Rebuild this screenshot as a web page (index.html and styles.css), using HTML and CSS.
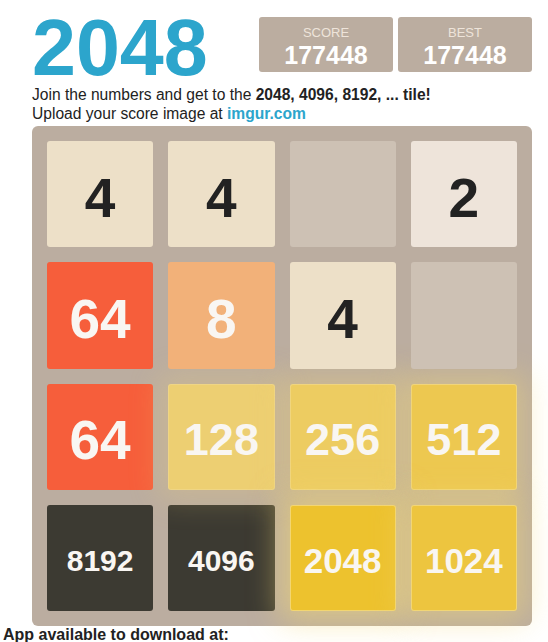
FILE: index.html
```html
<!DOCTYPE html>
<html lang="en">
<head>
    <meta charset="UTF-8">
    <meta name="viewport" content="width=device-width, initial-scale=1.0">
    <title>2048</title>
    <link rel="stylesheet" href="styles.css">
</head>
<body>
    <div class="container">
        <div class="heading">
            <h1 class="title">2048</h1>
            <div class="scores">
                <div class="score-box">
                    <span class="score-label">SCORE</span>
                    <span class="score-value">177448</span>
                </div>
                <div class="score-box">
                    <span class="score-label">BEST</span>
                    <span class="score-value">177448</span>
                </div>
            </div>
        </div>

        <p class="intro">
            Join the numbers and get to the <strong>2048, 4096, 8192, ... tile!</strong><br>
            Upload your score image at <a href="#" class="link">imgur.com</a>
        </p>

        <div class="board">
            <div class="tile tile-4">4</div>
            <div class="tile tile-4">4</div>
            <div class="tile"></div>
            <div class="tile tile-2">2</div>

            <div class="tile tile-64">64</div>
            <div class="tile tile-8">8</div>
            <div class="tile tile-4">4</div>
            <div class="tile"></div>

            <div class="tile tile-64 tile-under">64</div>
            <div class="tile tile-128">128</div>
            <div class="tile tile-256">256</div>
            <div class="tile tile-512">512</div>

            <div class="tile tile-super">8192</div>
            <div class="tile tile-super tile-under">4096</div>
            <div class="tile tile-2048">2048</div>
            <div class="tile tile-1024">1024</div>
        </div>
    </div>

    <p class="app-notice">App available to download at:</p>
</body>
</html>
```

FILE: styles.css
```css
body {
    font-family: "Liberation Sans", Arial, sans-serif;
    margin: 0;
    padding: 0;
    background: #fff;
    color: #222;
}

.container {
    width: 500px;
    margin-left: 32px;
    padding-top: 10px;
}

.heading {
    display: flex;
    justify-content: space-between;
    align-items: flex-start;
}

.title {
    margin: 0;
    font-size: 79px;
    line-height: 75px;
    font-weight: bold;
    color: #2ca5cc;
}

.scores {
    display: flex;
    gap: 5px;
    margin-top: 7px;
}

.score-box {
    width: 134px;
    height: 55px;
    box-sizing: border-box;
    padding-top: 8px;
    background: #bbada0;
    border-radius: 3px;
    display: flex;
    flex-direction: column;
    align-items: center;
}

.score-label {
    font-size: 13px;
    line-height: 15px;
    color: #eee4da;
}

.score-value {
    margin-top: 3px;
    font-size: 25px;
    line-height: 25px;
    font-weight: bold;
    color: #fff;
}

.intro {
    margin: 0 0 3px;
    font-size: 15.6px;
    line-height: 19px;
}

.link {
    color: #2ca5cc;
    font-weight: bold;
    text-decoration: none;
}

.board {
    width: 500px;
    height: 500px;
    box-sizing: border-box;
    padding: 15px;
    background: #bbada0;
    border-radius: 6px;
    display: grid;
    grid-template-columns: repeat(4, 1fr);
    grid-template-rows: repeat(4, 1fr);
    gap: 15px;
}

/* plain tiles sit above the glow of the big ones */
.tile {
    position: relative;
    z-index: 2;
    box-sizing: border-box;
    padding-top: 7px;
    border-radius: 3px;
    background: #cdc1b4;
    display: flex;
    justify-content: center;
    align-items: center;
    font-size: 55px;
    font-weight: bold;
    color: #f9f6f2;
}

.tile-under {
    z-index: 0;
}

.tile-2 { background: #eee4da; color: #222; }
.tile-4 { background: #ede0c8; color: #222; }
.tile-8 { background: #f2b179; }
.tile-64 { background: #f65e3b; }

.tile-128,
.tile-256,
.tile-512 {
    z-index: 1;
    font-size: 45px;
}

.tile-128 {
    background: #edcf72;
    box-shadow: 0 0 30px 10px rgba(243, 215, 116, 0.24), inset 0 0 0 1px rgba(255, 255, 255, 0.14);
}

.tile-256 {
    background: #edcc61;
    box-shadow: 0 0 30px 10px rgba(243, 215, 116, 0.32), inset 0 0 0 1px rgba(255, 255, 255, 0.19);
}

.tile-512 {
    background: #edc850;
    box-shadow: 0 0 30px 10px rgba(243, 215, 116, 0.4), inset 0 0 0 1px rgba(255, 255, 255, 0.24);
}

.tile-1024,
.tile-2048 {
    z-index: 1;
    font-size: 35px;
}

.tile-1024 {
    background: #edc53f;
    box-shadow: 0 0 30px 10px rgba(243, 215, 116, 0.48), inset 0 0 0 1px rgba(255, 255, 255, 0.29);
}

.tile-2048 {
    background: #edc22e;
    box-shadow: 0 0 30px 10px rgba(243, 215, 116, 0.56), inset 0 0 0 1px rgba(255, 255, 255, 0.33);
}

.tile-super {
    background: #3c3a32;
    font-size: 30px;
}

.app-notice {
    margin: 0;
    padding-left: 3px;
    font-size: 16px;
    line-height: 18px;
    font-weight: bold;
}
```
